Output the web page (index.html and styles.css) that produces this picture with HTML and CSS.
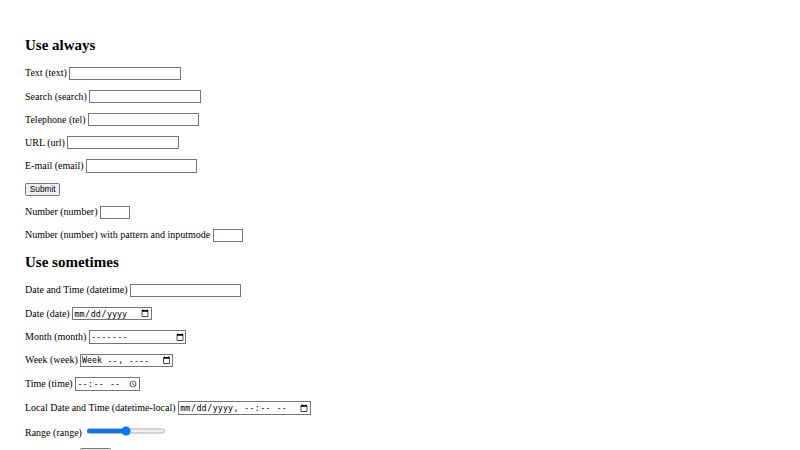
FILE: index.html
```html
<!DOCTYPE html>
<html lang="en">
<head>
<meta charset="utf-8">
<title>HTML5 input types</title>
<link rel="stylesheet" href="styles.css">
</head>
<body>
<div class="page">
  <h2>Use always</h2>
  <p><label>Text (text) <input class="field" type="text"></label></p>
  <p><label>Search (search) <input class="field" type="search"></label></p>
  <p><label>Telephone (tel) <input class="field" type="tel"></label></p>
  <p><label>URL (url) <input class="field" type="url"></label></p>
  <p><label>E-mail (email) <input class="field" type="email"></label></p>
  <p><input type="submit" value="Submit"></p>
  <p><label>Number (number) <input class="num" type="number"></label></p>
  <p><label>Number (number) with pattern and inputmode <input class="num" type="number" pattern="[0-9]*" inputmode="numeric"></label></p>

  <h2>Use sometimes</h2>
  <p><label>Date and Time (datetime) <input class="field" type="datetime"></label></p>
  <p><label>Date (date) <input class="date" type="date"></label></p>
  <p><label>Month (month) <input class="month" type="month"></label></p>
  <p><label>Week (week) <input class="week" type="week"></label></p>
  <p><label>Time (time) <input class="time" type="time"></label></p>
  <p><label>Local Date and Time (datetime-local) <input class="local" type="datetime-local"></label></p>
  <p><label>Range (range) <input type="range"></label></p>
  <p><label>Color (color) <input type="color"></label></p>
</div>
</body>
</html>
```
FILE: styles.css
```css
html {
  zoom: 0.625;
}
body {
  margin: 8px;
  font-family: "Liberation Serif", "Times New Roman", serif;
  font-size: 16px;
  color: #000;
  background: #fff;
}
.page {
  padding: 32px;
}
input {
  box-sizing: border-box;
}
.field {
  width: 178px;
  height: 21px;
}
.num {
  width: 48px;
  height: 21px;
}
.date {
  width: 127px;
}
.month {
  width: 156px;
}
.week {
  width: 148px;
}
.time {
  width: 104px;
}
.local {
  width: 212px;
}
```
